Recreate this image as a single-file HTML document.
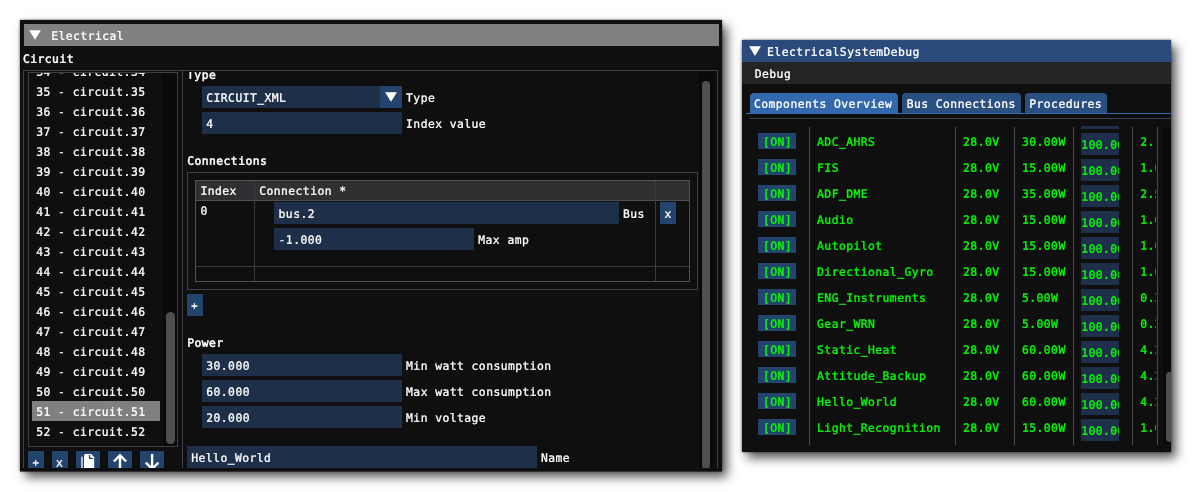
<!DOCTYPE html>
<html lang="en">
<head>
<meta charset="utf-8">
<title>Electrical</title>
<style>
html,body{margin:0;padding:0;background:#fff;}
body{width:1191px;height:492px;position:relative;overflow:hidden;font-family:"DejaVu Sans Mono", "Liberation Mono", monospace;font-size:11.35px;line-height:16px;}
.b{position:absolute;box-sizing:content-box;}
.win{background:#0f0f0f;box-shadow:0 0 2.5px rgba(0,0,0,0.6),5px 6px 10px rgba(0,0,0,0.66);}
.clip{position:absolute;left:0;top:0;width:1191px;height:492px;}
#root{position:absolute;left:0;top:0;width:1191px;height:492px;will-change:transform;}
.t{position:absolute;white-space:pre;transform-origin:0 0;font-weight:normal;letter-spacing:0.447px;-webkit-text-stroke:0.3px currentColor;}
.t.bd{-webkit-text-stroke:0.5px currentColor;}
.t.g{-webkit-text-stroke:0.4px currentColor;}
</style>
</head>
<body>
<div id="root">
<div class="b win" style="left:20px;top:20px;width:702px;height:451px;"></div>
<div class="b" style="left:20px;top:471px;width:702px;height:1px;background:rgba(15,15,15,0.55);"></div>
<div class="b" style="left:24px;top:24px;width:695px;height:22px;background:#808080;"></div>
<svg class="b" style="left:0;top:0" width="1191" height="492"><polygon points="29.10,30.20 40.90,30.20 35.00,39.80" fill="#fff"/></svg>
<span class="t" style="left:51px;top:27px;color:#fff;transform:translate(0.30px,0.70px) rotate(0.03deg);">Electrical</span>
<span class="t bd" style="left:23px;top:50px;color:#fff;transform:translate(0.00px,0.70px) rotate(0.03deg);">Circuit</span>
<div class="clip" style="clip-path:inset(20px 469px 24px 20px)">
<div class="b" style="left:23px;top:70px;width:158px;height:408px;border:1px solid #3f3f47;"></div>
<div class="b" style="left:183px;top:70px;width:535px;height:1px;background:#3f3f47;"></div>
<div class="b" style="left:717px;top:70px;width:1px;height:410px;background:#3f3f47;"></div>
</div>
<div class="b" style="left:28px;top:72px;width:148px;height:373px;border:1px solid #3f3f47;"></div>
<div class="clip" style="clip-path:inset(73px 1014px 46px 29px)">
<div class="b" style="left:163px;top:73px;width:14px;height:373px;background:#0a0a0a;"></div>
<div class="b" style="left:166px;top:312px;width:9px;height:131.5px;background:#4f4f4f;border-radius:4.5px;"></div>
<div class="b" style="left:32px;top:401px;width:128px;height:20px;background:#808080;"></div>
<span class="t" style="left:36px;top:63px;color:#fff;transform:translate(0.30px,0.70px) rotate(0.03deg);">34 - circuit.34</span>
<span class="t" style="left:36px;top:83px;color:#fff;transform:translate(0.30px,0.70px) rotate(0.03deg);">35 - circuit.35</span>
<span class="t" style="left:36px;top:103px;color:#fff;transform:translate(0.30px,0.70px) rotate(0.03deg);">36 - circuit.36</span>
<span class="t" style="left:36px;top:123px;color:#fff;transform:translate(0.30px,0.70px) rotate(0.03deg);">37 - circuit.37</span>
<span class="t" style="left:36px;top:143px;color:#fff;transform:translate(0.30px,0.70px) rotate(0.03deg);">38 - circuit.38</span>
<span class="t" style="left:36px;top:163px;color:#fff;transform:translate(0.30px,0.70px) rotate(0.03deg);">39 - circuit.39</span>
<span class="t" style="left:36px;top:183px;color:#fff;transform:translate(0.30px,0.70px) rotate(0.03deg);">40 - circuit.40</span>
<span class="t" style="left:36px;top:203px;color:#fff;transform:translate(0.30px,0.70px) rotate(0.03deg);">41 - circuit.41</span>
<span class="t" style="left:36px;top:223px;color:#fff;transform:translate(0.30px,0.70px) rotate(0.03deg);">42 - circuit.42</span>
<span class="t" style="left:36px;top:243px;color:#fff;transform:translate(0.30px,0.70px) rotate(0.03deg);">43 - circuit.43</span>
<span class="t" style="left:36px;top:263px;color:#fff;transform:translate(0.30px,0.70px) rotate(0.03deg);">44 - circuit.44</span>
<span class="t" style="left:36px;top:283px;color:#fff;transform:translate(0.30px,0.70px) rotate(0.03deg);">45 - circuit.45</span>
<span class="t" style="left:36px;top:303px;color:#fff;transform:translate(0.30px,0.70px) rotate(0.03deg);">46 - circuit.46</span>
<span class="t" style="left:36px;top:323px;color:#fff;transform:translate(0.30px,0.70px) rotate(0.03deg);">47 - circuit.47</span>
<span class="t" style="left:36px;top:343px;color:#fff;transform:translate(0.30px,0.70px) rotate(0.03deg);">48 - circuit.48</span>
<span class="t" style="left:36px;top:363px;color:#fff;transform:translate(0.30px,0.70px) rotate(0.03deg);">49 - circuit.49</span>
<span class="t" style="left:36px;top:383px;color:#fff;transform:translate(0.30px,0.70px) rotate(0.03deg);">50 - circuit.50</span>
<span class="t" style="left:36px;top:403px;color:#fff;transform:translate(0.30px,0.70px) rotate(0.03deg);">51 - circuit.51</span>
<span class="t" style="left:36px;top:423px;color:#fff;transform:translate(0.30px,0.70px) rotate(0.03deg);">52 - circuit.52</span>
</div>
<div class="clip" style="clip-path:inset(20px 469px 24px 20px)">
<div class="b" style="left:28px;top:451px;width:16px;height:24px;background:#23456d;"></div>
<div class="b" style="left:52px;top:451px;width:16px;height:24px;background:#23456d;"></div>
<div class="b" style="left:76px;top:451px;width:24px;height:24px;background:#23456d;"></div>
<div class="b" style="left:108px;top:451px;width:24px;height:24px;background:#23456d;"></div>
<div class="b" style="left:140px;top:451px;width:24px;height:24px;background:#23456d;"></div>
<svg class="b" style="left:0;top:0" width="1191" height="492"><text x="32.39" y="466.19" font-size="10.5" fill="#fff" stroke="#fff" stroke-width="0.3" transform="rotate(0.03 32.4 466.2)">+</text></svg>
<span class="t" style="left:56px;top:454px;color:#fff;transform:translate(0.10px,0.60px) rotate(0.03deg);">x</span>
<svg class="b" style="left:0;top:0" width="1191" height="492">
<path d="M85.5 454 H91.2 L94.2 457 V472 H84.0 V455.5 Q84.0 454 85.5 454 Z" fill="#fff"/>
<path d="M89.5 455 V458.3 H92.9" fill="none" stroke="#23456d" stroke-width="1.2"/>
<path d="M82.6 456.4 V472 H81.3 V457.7 Q81.3 456.4 82.6 456.4 Z" fill="#fff"/>
<path d="M113.8 461.5 L120 455.3 L126.2 461.5" fill="none" stroke="#fff" stroke-width="2.4"/>
<path d="M120 455.4 V472" fill="none" stroke="#fff" stroke-width="2.4"/>
<path d="M145.8 462.6 L152.1 468.9 L158.4 462.6" fill="none" stroke="#fff" stroke-width="2.4"/>
<path d="M152.1 453.9 V470" fill="none" stroke="#fff" stroke-width="2.4"/>
</svg>
</div>
<div class="clip" style="clip-path:inset(72px 474px 24px 183px)">
<div class="b" style="left:699px;top:71px;width:14px;height:397px;background:#0a0a0a;"></div>
<div class="b" style="left:702.4px;top:81px;width:7.600000000000023px;height:387.7px;background:#4f4f4f;border-radius:3.8px;"></div>
<span class="t bd" style="left:187px;top:66px;color:#fff;transform:translate(0.10px,0.70px) rotate(0.03deg);">Type</span>
<div class="b" style="left:202px;top:86px;width:200px;height:22px;background:#1d2f49;"></div>
<div class="b" style="left:380px;top:86px;width:22px;height:22px;background:#23456d;"></div>
<svg class="b" style="left:0;top:0" width="1191" height="492"><polygon points="385.10,92.20 396.90,92.20 391.00,101.80" fill="#fff"/></svg>
<span class="t" style="left:206px;top:89px;color:#fff;transform:translate(0.30px,0.70px) rotate(0.03deg);">CIRCUIT_XML</span>
<span class="t" style="left:406px;top:89px;color:#fff;transform:translate(0.10px,0.70px) rotate(0.03deg);">Type</span>
<div class="b" style="left:202px;top:112px;width:200px;height:22px;background:#1d2f49;"></div>
<span class="t" style="left:206px;top:115px;color:#fff;transform:translate(0.30px,0.70px) rotate(0.03deg);">4</span>
<span class="t" style="left:406px;top:115px;color:#fff;transform:translate(0.10px,0.70px) rotate(0.03deg);">Index value</span>
<span class="t bd" style="left:187px;top:152px;color:#fff;transform:translate(0.20px,0.70px) rotate(0.03deg);">Connections</span>
<div class="b" style="left:187px;top:172px;width:509px;height:116px;border:1px solid #3f3f47;"></div>
<div class="b" style="left:196px;top:181px;width:493px;height:19px;background:#303033;"></div>
<div class="b" style="left:195px;top:180px;width:493px;height:100px;border:1px solid #4f4f59;"></div>
<div class="b" style="left:196px;top:200px;width:493px;height:1px;background:#4f4f59;"></div>
<div class="b" style="left:254px;top:181px;width:1px;height:100px;background:#3b3b40;"></div>
<div class="b" style="left:655px;top:181px;width:1px;height:100px;background:#3b3b40;"></div>
<div class="b" style="left:196px;top:266px;width:493px;height:1px;background:#3b3b40;"></div>
<span class="t" style="left:200px;top:182px;color:#fff;transform:translate(0.50px,0.70px) rotate(0.03deg);">Index</span>
<span class="t" style="left:259px;top:182px;color:#fff;transform:translate(0.20px,0.70px) rotate(0.03deg);">Connection *</span>
<span class="t" style="left:200px;top:202px;color:#fff;transform:translate(0.50px,0.70px) rotate(0.03deg);">0</span>
<div class="b" style="left:274px;top:202px;width:345px;height:22px;background:#1d2f49;"></div>
<span class="t" style="left:278px;top:205px;color:#fff;transform:translate(0.60px,0.70px) rotate(0.03deg);">bus.2</span>
<span class="t" style="left:622px;top:205px;color:#fff;transform:translate(0.90px,0.70px) rotate(0.03deg);">Bus</span>
<div class="b" style="left:660px;top:202px;width:16px;height:22px;background:#23456d;"></div>
<span class="t" style="left:664px;top:205px;color:#fff;transform:translate(0.50px,0.70px) rotate(0.03deg);">x</span>
<div class="b" style="left:274px;top:228px;width:200px;height:22px;background:#1d2f49;"></div>
<span class="t" style="left:278px;top:231px;color:#fff;transform:translate(0.60px,0.70px) rotate(0.03deg);">-1.000</span>
<span class="t" style="left:478px;top:231px;color:#fff;transform:translate(0.30px,0.70px) rotate(0.03deg);">Max amp</span>
<div class="b" style="left:187px;top:294px;width:16px;height:22px;background:#23456d;"></div>
<svg class="b" style="left:0;top:0" width="1191" height="492"><text x="191.34" y="309.39" font-size="10.5" fill="#fff" stroke="#fff" stroke-width="0.3" transform="rotate(0.03 191.3 309.4)">+</text></svg>
<span class="t bd" style="left:187px;top:334px;color:#fff;transform:translate(0.20px,0.70px) rotate(0.03deg);">Power</span>
<div class="b" style="left:202px;top:354px;width:200px;height:22px;background:#1d2f49;"></div>
<span class="t" style="left:206px;top:357px;color:#fff;transform:translate(0.30px,0.70px) rotate(0.03deg);">30.000</span>
<span class="t" style="left:406px;top:357px;color:#fff;transform:translate(0.10px,0.70px) rotate(0.03deg);">Min watt consumption</span>
<div class="b" style="left:202px;top:380px;width:200px;height:22px;background:#1d2f49;"></div>
<span class="t" style="left:206px;top:383px;color:#fff;transform:translate(0.30px,0.70px) rotate(0.03deg);">60.000</span>
<span class="t" style="left:406px;top:383px;color:#fff;transform:translate(0.10px,0.70px) rotate(0.03deg);">Max watt consumption</span>
<div class="b" style="left:202px;top:406px;width:200px;height:22px;background:#1d2f49;"></div>
<span class="t" style="left:206px;top:409px;color:#fff;transform:translate(0.30px,0.70px) rotate(0.03deg);">20.000</span>
<span class="t" style="left:406px;top:409px;color:#fff;transform:translate(0.10px,0.70px) rotate(0.03deg);">Min voltage</span>
<div class="b" style="left:187px;top:446px;width:350px;height:24px;background:#1d2f49;"></div>
<span class="t" style="left:191px;top:449px;color:#fff;transform:translate(0.30px,0.70px) rotate(0.03deg);">Hello_World</span>
<span class="t" style="left:540px;top:449px;color:#fff;transform:translate(0.90px,0.70px) rotate(0.03deg);">Name</span>
</div>
<div class="b win" style="left:742px;top:40px;width:429px;height:412px;"></div>
<div class="clip" style="clip-path:inset(40px 20px 40px 742px)">
<div class="b" style="left:742px;top:40px;width:429px;height:22px;background:#294a7a;"></div>
<svg class="b" style="left:0;top:0" width="1191" height="492"><polygon points="749.10,46.30 760.90,46.30 755.00,55.90" fill="#fff"/></svg>
<span class="t" style="left:767px;top:43px;color:#fff;transform:translate(0.10px,0.70px) rotate(0.03deg);">ElectricalSystemDebug</span>
<div class="b" style="left:742px;top:62px;width:429px;height:22px;background:#242424;"></div>
<span class="t" style="left:754px;top:65px;color:#fff;transform:translate(0.80px,0.70px) rotate(0.03deg);">Debug</span>
<div class="b" style="left:750px;top:93px;width:148px;height:20px;background:#3368ad;border-radius:4px 4px 0 0;"></div>
<div class="b" style="left:902px;top:93px;width:119px;height:20px;background:#2a4f81;border-radius:4px 4px 0 0;"></div>
<div class="b" style="left:1025px;top:93px;width:82px;height:20px;background:#2a4f81;border-radius:4px 4px 0 0;"></div>
<span class="t" style="left:754px;top:95px;color:#fff;transform:translate(0.00px,0.70px) rotate(0.03deg);">Components Overview</span>
<span class="t" style="left:906px;top:95px;color:#fff;transform:translate(0.70px,0.70px) rotate(0.03deg);">Bus Connections</span>
<span class="t" style="left:1029px;top:95px;color:#fff;transform:translate(0.30px,0.70px) rotate(0.03deg);">Procedures</span>
<div class="b" style="left:746px;top:113px;width:425px;height:1px;background:#3368ad;"></div>
<div class="b" style="left:750px;top:118px;width:421px;height:1px;background:#3f3f47;"></div>
</div>
<div class="clip" style="clip-path:inset(126px 20px 47px 742px)">
<div class="b" style="left:809px;top:127px;width:1px;height:318px;background:#4a4a52;"></div>
<div class="b" style="left:955px;top:127px;width:1px;height:318px;background:#4a4a52;"></div>
<div class="b" style="left:1014px;top:127px;width:1px;height:318px;background:#4a4a52;"></div>
<div class="b" style="left:1073px;top:127px;width:1px;height:318px;background:#4a4a52;"></div>
<div class="b" style="left:1132px;top:127px;width:1px;height:318px;background:#4a4a52;"></div>
<div class="b" style="left:1157px;top:127px;width:1px;height:318px;background:#4a4a52;"></div>
<div class="b" style="left:1163px;top:127px;width:8px;height:318px;background:#0a0a0a;"></div>
<div class="b" style="left:1166px;top:372px;width:10px;height:70px;background:#4f4f4f;border-radius:4px;"></div>
<div class="b" style="left:1081px;top:107px;width:38px;height:22px;background:#1d2f49;"></div>
<div class="b" style="left:758px;top:133px;width:38px;height:16px;background:#23456d;"></div>
<span class="t g" style="left:762px;top:133px;color:#08f808;transform:translate(0.90px,0.70px) rotate(0.03deg);">[ON]</span>
<span class="t g" style="left:817px;top:133px;color:#08f808;transform:translate(0.10px,0.70px) rotate(0.03deg);">ADC_AHRS</span>
<span class="t g" style="left:963px;top:133px;color:#08f808;transform:translate(0.10px,0.70px) rotate(0.03deg);">28.0V</span>
<span class="t g" style="left:1022px;top:133px;color:#08f808;transform:translate(0.00px,0.70px) rotate(0.03deg);">30.00W</span>
<div class="b" style="left:1081px;top:133px;width:38px;height:22px;background:#1d2f49;"></div>
<div class="b" style="left:758px;top:159px;width:38px;height:16px;background:#23456d;"></div>
<span class="t g" style="left:762px;top:159px;color:#08f808;transform:translate(0.90px,0.70px) rotate(0.03deg);">[ON]</span>
<span class="t g" style="left:817px;top:159px;color:#08f808;transform:translate(0.10px,0.70px) rotate(0.03deg);">FIS</span>
<span class="t g" style="left:963px;top:159px;color:#08f808;transform:translate(0.10px,0.70px) rotate(0.03deg);">28.0V</span>
<span class="t g" style="left:1022px;top:159px;color:#08f808;transform:translate(0.00px,0.70px) rotate(0.03deg);">15.00W</span>
<div class="b" style="left:1081px;top:159px;width:38px;height:22px;background:#1d2f49;"></div>
<div class="b" style="left:758px;top:185px;width:38px;height:16px;background:#23456d;"></div>
<span class="t g" style="left:762px;top:185px;color:#08f808;transform:translate(0.90px,0.70px) rotate(0.03deg);">[ON]</span>
<span class="t g" style="left:817px;top:185px;color:#08f808;transform:translate(0.10px,0.70px) rotate(0.03deg);">ADF_DME</span>
<span class="t g" style="left:963px;top:185px;color:#08f808;transform:translate(0.10px,0.70px) rotate(0.03deg);">28.0V</span>
<span class="t g" style="left:1022px;top:185px;color:#08f808;transform:translate(0.00px,0.70px) rotate(0.03deg);">35.00W</span>
<div class="b" style="left:1081px;top:185px;width:38px;height:22px;background:#1d2f49;"></div>
<div class="b" style="left:758px;top:211px;width:38px;height:16px;background:#23456d;"></div>
<span class="t g" style="left:762px;top:211px;color:#08f808;transform:translate(0.90px,0.70px) rotate(0.03deg);">[ON]</span>
<span class="t g" style="left:817px;top:211px;color:#08f808;transform:translate(0.10px,0.70px) rotate(0.03deg);">Audio</span>
<span class="t g" style="left:963px;top:211px;color:#08f808;transform:translate(0.10px,0.70px) rotate(0.03deg);">28.0V</span>
<span class="t g" style="left:1022px;top:211px;color:#08f808;transform:translate(0.00px,0.70px) rotate(0.03deg);">15.00W</span>
<div class="b" style="left:1081px;top:211px;width:38px;height:22px;background:#1d2f49;"></div>
<div class="b" style="left:758px;top:237px;width:38px;height:16px;background:#23456d;"></div>
<span class="t g" style="left:762px;top:237px;color:#08f808;transform:translate(0.90px,0.70px) rotate(0.03deg);">[ON]</span>
<span class="t g" style="left:817px;top:237px;color:#08f808;transform:translate(0.10px,0.70px) rotate(0.03deg);">Autopilot</span>
<span class="t g" style="left:963px;top:237px;color:#08f808;transform:translate(0.10px,0.70px) rotate(0.03deg);">28.0V</span>
<span class="t g" style="left:1022px;top:237px;color:#08f808;transform:translate(0.00px,0.70px) rotate(0.03deg);">15.00W</span>
<div class="b" style="left:1081px;top:237px;width:38px;height:22px;background:#1d2f49;"></div>
<div class="b" style="left:758px;top:263px;width:38px;height:16px;background:#23456d;"></div>
<span class="t g" style="left:762px;top:263px;color:#08f808;transform:translate(0.90px,0.70px) rotate(0.03deg);">[ON]</span>
<span class="t g" style="left:817px;top:263px;color:#08f808;transform:translate(0.10px,0.70px) rotate(0.03deg);">Directional_Gyro</span>
<span class="t g" style="left:963px;top:263px;color:#08f808;transform:translate(0.10px,0.70px) rotate(0.03deg);">28.0V</span>
<span class="t g" style="left:1022px;top:263px;color:#08f808;transform:translate(0.00px,0.70px) rotate(0.03deg);">15.00W</span>
<div class="b" style="left:1081px;top:263px;width:38px;height:22px;background:#1d2f49;"></div>
<div class="b" style="left:758px;top:289px;width:38px;height:16px;background:#23456d;"></div>
<span class="t g" style="left:762px;top:289px;color:#08f808;transform:translate(0.90px,0.70px) rotate(0.03deg);">[ON]</span>
<span class="t g" style="left:817px;top:289px;color:#08f808;transform:translate(0.10px,0.70px) rotate(0.03deg);">ENG_Instruments</span>
<span class="t g" style="left:963px;top:289px;color:#08f808;transform:translate(0.10px,0.70px) rotate(0.03deg);">28.0V</span>
<span class="t g" style="left:1022px;top:289px;color:#08f808;transform:translate(0.00px,0.70px) rotate(0.03deg);">5.00W</span>
<div class="b" style="left:1081px;top:289px;width:38px;height:22px;background:#1d2f49;"></div>
<div class="b" style="left:758px;top:315px;width:38px;height:16px;background:#23456d;"></div>
<span class="t g" style="left:762px;top:315px;color:#08f808;transform:translate(0.90px,0.70px) rotate(0.03deg);">[ON]</span>
<span class="t g" style="left:817px;top:315px;color:#08f808;transform:translate(0.10px,0.70px) rotate(0.03deg);">Gear_WRN</span>
<span class="t g" style="left:963px;top:315px;color:#08f808;transform:translate(0.10px,0.70px) rotate(0.03deg);">28.0V</span>
<span class="t g" style="left:1022px;top:315px;color:#08f808;transform:translate(0.00px,0.70px) rotate(0.03deg);">5.00W</span>
<div class="b" style="left:1081px;top:315px;width:38px;height:22px;background:#1d2f49;"></div>
<div class="b" style="left:758px;top:341px;width:38px;height:16px;background:#23456d;"></div>
<span class="t g" style="left:762px;top:341px;color:#08f808;transform:translate(0.90px,0.70px) rotate(0.03deg);">[ON]</span>
<span class="t g" style="left:817px;top:341px;color:#08f808;transform:translate(0.10px,0.70px) rotate(0.03deg);">Static_Heat</span>
<span class="t g" style="left:963px;top:341px;color:#08f808;transform:translate(0.10px,0.70px) rotate(0.03deg);">28.0V</span>
<span class="t g" style="left:1022px;top:341px;color:#08f808;transform:translate(0.00px,0.70px) rotate(0.03deg);">60.00W</span>
<div class="b" style="left:1081px;top:341px;width:38px;height:22px;background:#1d2f49;"></div>
<div class="b" style="left:758px;top:367px;width:38px;height:16px;background:#23456d;"></div>
<span class="t g" style="left:762px;top:367px;color:#08f808;transform:translate(0.90px,0.70px) rotate(0.03deg);">[ON]</span>
<span class="t g" style="left:817px;top:367px;color:#08f808;transform:translate(0.10px,0.70px) rotate(0.03deg);">Attitude_Backup</span>
<span class="t g" style="left:963px;top:367px;color:#08f808;transform:translate(0.10px,0.70px) rotate(0.03deg);">28.0V</span>
<span class="t g" style="left:1022px;top:367px;color:#08f808;transform:translate(0.00px,0.70px) rotate(0.03deg);">60.00W</span>
<div class="b" style="left:1081px;top:367px;width:38px;height:22px;background:#1d2f49;"></div>
<div class="b" style="left:758px;top:393px;width:38px;height:16px;background:#23456d;"></div>
<span class="t g" style="left:762px;top:393px;color:#08f808;transform:translate(0.90px,0.70px) rotate(0.03deg);">[ON]</span>
<span class="t g" style="left:817px;top:393px;color:#08f808;transform:translate(0.10px,0.70px) rotate(0.03deg);">Hello_World</span>
<span class="t g" style="left:963px;top:393px;color:#08f808;transform:translate(0.10px,0.70px) rotate(0.03deg);">28.0V</span>
<span class="t g" style="left:1022px;top:393px;color:#08f808;transform:translate(0.00px,0.70px) rotate(0.03deg);">60.00W</span>
<div class="b" style="left:1081px;top:393px;width:38px;height:22px;background:#1d2f49;"></div>
<div class="b" style="left:758px;top:419px;width:38px;height:16px;background:#23456d;"></div>
<span class="t g" style="left:762px;top:419px;color:#08f808;transform:translate(0.90px,0.70px) rotate(0.03deg);">[ON]</span>
<span class="t g" style="left:817px;top:419px;color:#08f808;transform:translate(0.10px,0.70px) rotate(0.03deg);">Light_Recognition</span>
<span class="t g" style="left:963px;top:419px;color:#08f808;transform:translate(0.10px,0.70px) rotate(0.03deg);">28.0V</span>
<span class="t g" style="left:1022px;top:419px;color:#08f808;transform:translate(0.00px,0.70px) rotate(0.03deg);">15.00W</span>
<div class="b" style="left:1081px;top:419px;width:38px;height:22px;background:#1d2f49;"></div>
</div>
<div class="clip" style="clip-path:inset(127px 72px 47px 1081px)">
<span class="t g" style="left:1081px;top:136px;color:#08f808;transform:translate(0.15px,0.70px) rotate(0.03deg);">100.00</span>
<span class="t g" style="left:1081px;top:162px;color:#08f808;transform:translate(0.15px,0.70px) rotate(0.03deg);">100.00</span>
<span class="t g" style="left:1081px;top:188px;color:#08f808;transform:translate(0.15px,0.70px) rotate(0.03deg);">100.00</span>
<span class="t g" style="left:1081px;top:214px;color:#08f808;transform:translate(0.15px,0.70px) rotate(0.03deg);">100.00</span>
<span class="t g" style="left:1081px;top:240px;color:#08f808;transform:translate(0.15px,0.70px) rotate(0.03deg);">100.00</span>
<span class="t g" style="left:1081px;top:266px;color:#08f808;transform:translate(0.15px,0.70px) rotate(0.03deg);">100.00</span>
<span class="t g" style="left:1081px;top:292px;color:#08f808;transform:translate(0.15px,0.70px) rotate(0.03deg);">100.00</span>
<span class="t g" style="left:1081px;top:318px;color:#08f808;transform:translate(0.15px,0.70px) rotate(0.03deg);">100.00</span>
<span class="t g" style="left:1081px;top:344px;color:#08f808;transform:translate(0.15px,0.70px) rotate(0.03deg);">100.00</span>
<span class="t g" style="left:1081px;top:370px;color:#08f808;transform:translate(0.15px,0.70px) rotate(0.03deg);">100.00</span>
<span class="t g" style="left:1081px;top:396px;color:#08f808;transform:translate(0.15px,0.70px) rotate(0.03deg);">100.00</span>
<span class="t g" style="left:1081px;top:422px;color:#08f808;transform:translate(0.15px,0.70px) rotate(0.03deg);">100.00</span>
</div>
<div class="clip" style="clip-path:inset(127px 35px 47px 1133px)">
<span class="t g" style="left:1140px;top:133px;color:#08f808;transform:translate(0.30px,0.70px) rotate(0.03deg);">2.14</span>
<span class="t g" style="left:1140px;top:159px;color:#08f808;transform:translate(0.30px,0.70px) rotate(0.03deg);">1.07</span>
<span class="t g" style="left:1140px;top:185px;color:#08f808;transform:translate(0.30px,0.70px) rotate(0.03deg);">2.50</span>
<span class="t g" style="left:1140px;top:211px;color:#08f808;transform:translate(0.30px,0.70px) rotate(0.03deg);">1.07</span>
<span class="t g" style="left:1140px;top:237px;color:#08f808;transform:translate(0.30px,0.70px) rotate(0.03deg);">1.07</span>
<span class="t g" style="left:1140px;top:263px;color:#08f808;transform:translate(0.30px,0.70px) rotate(0.03deg);">1.07</span>
<span class="t g" style="left:1140px;top:289px;color:#08f808;transform:translate(0.30px,0.70px) rotate(0.03deg);">0.36</span>
<span class="t g" style="left:1140px;top:315px;color:#08f808;transform:translate(0.30px,0.70px) rotate(0.03deg);">0.36</span>
<span class="t g" style="left:1140px;top:341px;color:#08f808;transform:translate(0.30px,0.70px) rotate(0.03deg);">4.29</span>
<span class="t g" style="left:1140px;top:367px;color:#08f808;transform:translate(0.30px,0.70px) rotate(0.03deg);">4.29</span>
<span class="t g" style="left:1140px;top:393px;color:#08f808;transform:translate(0.30px,0.70px) rotate(0.03deg);">4.29</span>
<span class="t g" style="left:1140px;top:419px;color:#08f808;transform:translate(0.30px,0.70px) rotate(0.03deg);">1.07</span>
</div>
</div>
</body>
</html>
